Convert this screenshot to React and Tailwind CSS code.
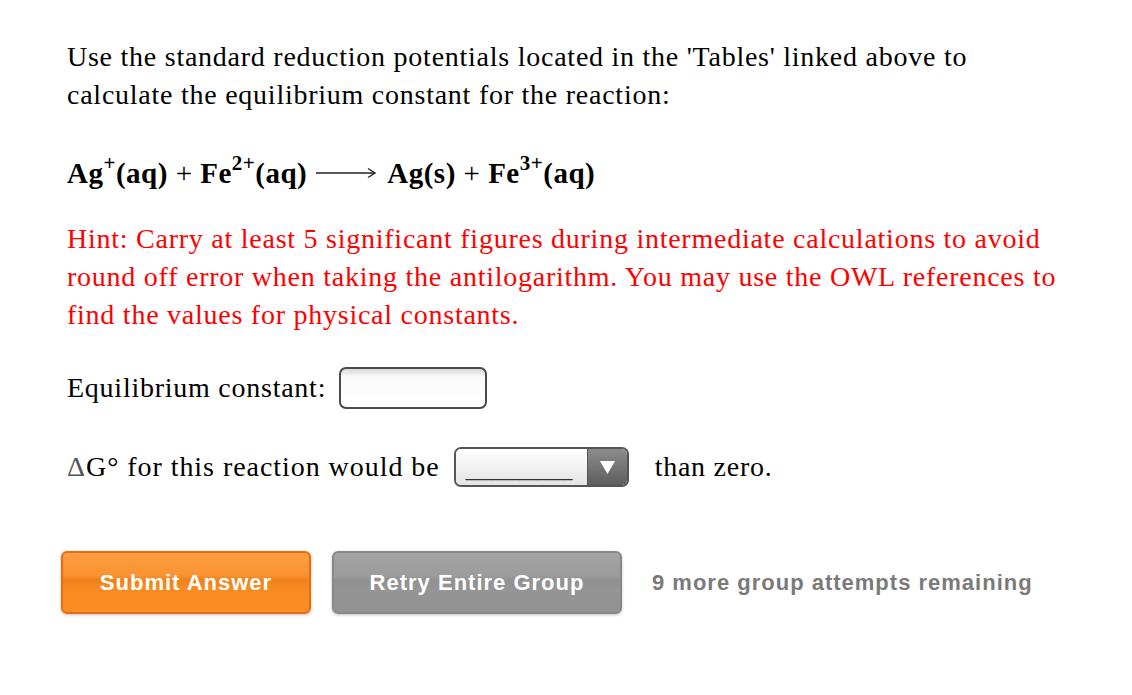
import React from "react";

// Question page: equilibrium constant from reduction potentials

const serif = "font-['Liberation_Serif','Times_New_Roman',serif]";
const sans = "font-['Liberation_Sans',Arial,sans-serif]";

function Arrow() {
  return (
    <svg width="62" height="14" viewBox="0 0 62 14" className="inline-block mx-[9px] align-[3px]">
      <line x1="0" y1="7" x2="58" y2="7" stroke="#222" strokeWidth="1.4" />
      <path d="M52 2.5 L59 7 L52 11.5" fill="none" stroke="#222" strokeWidth="1.4" />
    </svg>
  );
}

function Sup({ children }) {
  return <sup className="text-[21px] leading-none -top-[13px]">{children}</sup>;
}

export default function App() {
  return (
    <div className={`${serif} bg-white text-black w-[1132px] h-[695px] pt-[38px] pl-[67px] text-[28px] leading-[38px] tracking-[0.75px]`}>
      <p>
        Use the standard reduction potentials located in the 'Tables' linked above to
        <br />
        calculate the equilibrium constant for the reaction:
      </p>

      {/* reaction */}
      <p className="mt-[40px] font-bold whitespace-nowrap text-[29px] tracking-[0.5px]">
        Ag<Sup>+</Sup>(aq) <span className="font-normal">+</span> Fe<Sup>2+</Sup>(aq)
        <Arrow />
        Ag(s) <span className="font-normal">+</span> Fe<Sup>3+</Sup>(aq)
      </p>

      <p className="mt-[28px] text-[#ff0000]">
        Hint: Carry at least 5 significant figures during intermediate calculations to avoid
        <br />
        round off error when taking the antilogarithm. You may use the OWL references to
        <br />
        find the values for physical constants.
      </p>

      <div className="mt-[33px] flex items-center h-[42px]">
        <span>Equilibrium constant:</span>
        <div className="ml-[13px] w-[148px] h-[42px] rounded-[7px] border-2 border-[#4a4a4a] bg-[linear-gradient(to_bottom,#d8d8d8_0px,#fafafa_8px,#ffffff_100%)]" />
      </div>

      <div className="mt-[38px] flex items-center h-[40px]">
        <span className="tracking-[0.95px]">
          <span className="text-[#555]">Δ</span>G° for this reaction would be
        </span>
        <div className="ml-[14px] w-[175px] h-[40px] rounded-[7px] border-2 border-[#555] flex overflow-hidden">
          <div className="flex-1 bg-[linear-gradient(to_bottom,#ffffff,#e4e4e4)] flex items-end pl-[10px] pb-[5px]">
            <span className={`${sans} text-[16px] leading-none text-[#333] tracking-[0px]`}>____________</span>
          </div>
          <div className="w-[40px] border-l border-[#555] bg-[linear-gradient(to_bottom,#8c8c8c,#5e5e5e)] flex items-center justify-center">
            <svg width="15" height="13" viewBox="0 0 15 13">
              <path d="M0 0 H15 L7.5 13 Z" fill="#fff" />
            </svg>
          </div>
        </div>
        <span className="ml-[26px]">than zero.</span>
      </div>

      {/* actions */}
      <div className={`${sans} mt-[64px] -ml-[6px] flex items-center font-bold text-[22px] tracking-[1px]`}>
        <button className="w-[250px] h-[63px] rounded-[6px] border-2 border-[#ea6c10] text-white shadow-[0_1px_3px_rgba(0,0,0,0.25)] bg-[linear-gradient(to_bottom,#fc9d42_0%,#fa9231_38%,#ee8219_46%,#f98b23_62%,#fb8d24_100%)]">
          Submit Answer
        </button>
        <button className="ml-[21px] w-[290px] h-[63px] rounded-[6px] border-2 border-[#888] text-white shadow-[0_1px_3px_rgba(0,0,0,0.25)] bg-[linear-gradient(to_bottom,#a4a4a4_0%,#9c9c9c_38%,#909090_46%,#959595_62%,#929292_100%)]">
          Retry Entire Group
        </button>
        <span className="ml-[30px] text-[#7a7a7a]">9 more group attempts remaining</span>
      </div>
    </div>
  );
}
